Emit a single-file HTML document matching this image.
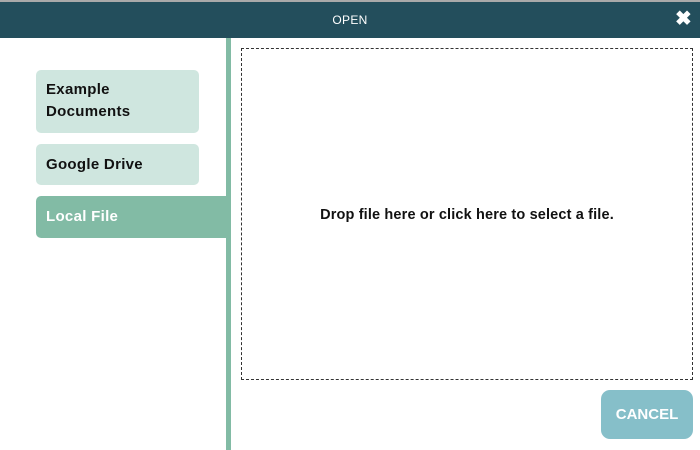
<!DOCTYPE html>
<html><head><style>
*{margin:0;padding:0;box-sizing:border-box}
body{width:700px;height:450px;background:#fff;font-family:"Liberation Sans",sans-serif;position:relative;overflow:hidden}
.top{position:absolute;left:0;top:0;width:700px;height:2px;background:#a9a9a9}
.hdr{position:absolute;left:0;top:2px;width:700px;height:36px;background:#234e5c;color:#fff;font-size:12px;text-align:center;line-height:36px;letter-spacing:.3px}
.x{position:absolute;right:8px;top:0;font-size:20px;font-weight:bold;line-height:34px}
.bar{position:absolute;left:226px;top:38px;width:5px;height:412px;background:#82bba5}
.btn{position:absolute;left:36px;width:163px;background:#cfe6df;border-radius:5px;color:#111;font-size:15px;font-weight:bold;padding-left:10px;line-height:22px;letter-spacing:.3px}
.local{background:#82bba5;color:#fff;width:195px;border-radius:5px 0 0 5px}
.drop{position:absolute;left:241px;top:48px;width:452px;height:332px;border:1px dashed #333;display:flex;align-items:center;justify-content:center;font-size:14.5px;font-weight:bold;color:#111;letter-spacing:.15px;padding-top:2px}
.cancel{position:absolute;left:601px;top:390px;width:92px;height:49px;background:#86bfc9;border-radius:9px;color:#fff;font-size:15px;font-weight:bold;text-align:center;line-height:49px}
</style></head><body>
<div class="top"></div>
<div class="hdr">OPEN<span class="x">✖</span></div>
<div class="bar"></div>
<div class="btn" style="top:70px;height:63px;padding-top:9px">Example<br>Documents</div>
<div class="btn" style="top:144px;height:41px;line-height:41px">Google Drive</div>
<div class="btn local" style="top:196px;height:42px;line-height:42px">Local File</div>
<div class="drop">Drop file here or click here to select a file.</div>
<div class="cancel">CANCEL</div>
</body></html>
